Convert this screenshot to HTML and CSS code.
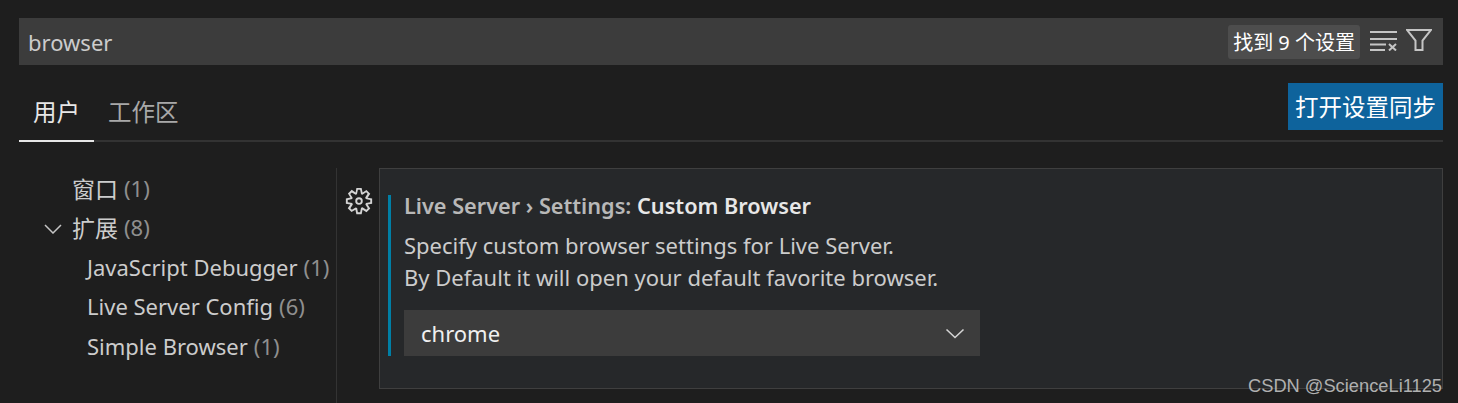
FILE: index.html
```html
<!DOCTYPE html>
<html>
  <head>
    <meta charset="utf-8">
    <link rel="stylesheet" href="styles.css">
  </head>
  <body>
    <div class="search">
      <span class="search-text">browser</span>
      <span class="count">找到 9 个设置</span>
      <svg class="clear-icon" width="27" height="20" viewBox="0 0 27 20" fill="none" stroke="#c5c5c5" stroke-width="2">
        <path d="M0 1h27M0 8h27M0 13.500h16M0 19h15"/>
        <path d="M19 13l7 6.500M26 13l-7 6.500"/>
      </svg>
      <svg class="filter-icon" width="26" height="22" viewBox="0 0 26 22" fill="none" stroke="#c5c5c5" stroke-width="2">
        <path d="M1 1h24L16.500 11.500V21h-7V11.500z"/>
      </svg>
    </div>

    <div class="tabs">
      <div class="tab active">用户</div>
      <div class="tab">工作区</div>
      <button class="sync">打开设置同步</button>
    </div>

    <div class="main">
      <div class="tree">
        <div class="tree-row level1"><span class="cjk">窗口</span> <span class="num">(1)</span></div>
        <div class="tree-row level1">
          <svg class="twistie" width="18" height="10" viewBox="0 0 18 10" fill="none" stroke="#c5c5c5" stroke-width="1.500"><path d="M1 1l8 8 8-8"/></svg>
          <span class="cjk">扩展</span> <span class="num">(8)</span>
        </div>
        <div class="tree-row level2">JavaScript Debugger <span class="num">(1)</span></div>
        <div class="tree-row level2">Live Server Config <span class="num">(6)</span></div>
        <div class="tree-row level2">Simple Browser <span class="num">(1)</span></div>
      </div>

      <div class="gear-col">
        <svg width="30" height="30" viewBox="0 0 16 16" fill="#d4d4d4">
          <path fill-rule="evenodd" d="M9.100 4.400L8.600 2H7.400l-.5 2.400-.7.300-2-1.300-.9.800 1.300 2-.2.700-2.400.5v1.200l2.400.5.300.8-1.300 2 .8.800 2-1.300.8.300.4 2.300h1.200l.5-2.400.8-.3 2 1.300.8-.8-1.300-2 .3-.8 2.300-.4V7.400l-2.400-.5-.3-.8 1.300-2-.8-.8-2 1.300-.7-.2zM9.400 1l.5 2.400L12 2.100l2 2-1.400 2.100 2.400.4v2.800l-2.400.5L14 12l-2 2-2.100-1.400-.5 2.400H6.600l-.5-2.400L4 13.900l-2-2 1.400-2.100L1 9.400V6.600l2.400-.5L2.100 4l2-2 2.100 1.400.4-2.400h2.800zM10 8a2 2 0 1 1-4 0 2 2 0 0 1 4 0zM8 9a1 1 0 1 0 0-2 1 1 0 0 0 0 2z"/>
        </svg>
      </div>

      <div class="card">
        <div class="setting">
          <div class="setting-title">Live Server › Settings: <span class="setting-name">Custom Browser</span></div>
          <div class="setting-desc">
            <p>Specify custom browser settings for Live Server.</p>
            <p>By Default it will open your default favorite browser.</p>
          </div>
          <div class="select">
            <span>chrome</span>
            <svg width="20" height="11" viewBox="0 0 20 11" fill="none" stroke="#d4d4d4" stroke-width="1.600"><path d="M1.500 1.500l8.500 8 8.500-8"/></svg>
          </div>
        </div>
      </div>
    </div>

    <div class="watermark">CSDN @ScienceLi1125</div>
  </body>
</html>
```

FILE: styles.css
```css
* {
  box-sizing: border-box;
}

html, body {
  height: 403px;
  overflow: hidden;
}

body {
  margin: 0;
  padding: 18px 15px 0 19px;
  position: relative;
  background-color: #1e1e1e;
  color: #cccccc;
  font-family: "Noto Sans", "Noto Sans CJK SC", sans-serif;
  font-size: 22px;
}

.search {
  display: flex;
  align-items: center;
  height: 47px;
  padding: 0 11px 0 9px;
  background-color: #3c3c3c;
}

.search-text {
  flex: 1;
  font-size: 22px;
}

.count {
  padding: 2px 5px;
  height: 34px;
  line-height: 32px;
  margin-right: 10px;
  border-radius: 3px;
  background-color: #4d4d4d;
  color: #ffffff;
  font-size: 20px;
}

.clear-icon {
  margin: 0 9px 2px 0;
}

.filter-icon {
  margin-bottom: 3px;
}

.tabs {
  display: flex;
  height: 77px;
  padding-top: 18px;
  border-bottom: 2px solid #333333;
}

.tab {
  height: 59px;
  padding: 12px 14px 0 14px;
  color: #a8a8a8;
  font-size: 23.500px;
  line-height: 34px;
  white-space: nowrap;
}

.tab.active {
  width: 75px;
  border-bottom: 2px solid #e7e7e7;
  color: #e7e7e7;
}

.sync {
  margin-left: auto;
  width: 155px;
  height: 47px;
  padding: 0 0 2px;
  border: none;
  background-color: #0e639c;
  color: #ffffff;
  font-family: inherit;
  font-size: 23.500px;
}

.main {
  display: flex;
  margin-top: 26px;
}

.tree {
  width: 318px;
  height: 235px;
  border-right: 1px solid #333333;
  white-space: nowrap;
}

.tree-row {
  display: flex;
  align-items: center;
  gap: 6px;
  height: 39.500px;
}

.cjk {
  font-size: 23px;
}

.level1 {
  padding-left: 53px;
  position: relative;
}

.level2 {
  padding-left: 68px;
}

.num {
  color: #8f8f8f;
}

.twistie {
  position: absolute;
  left: 25px;
  top: 16px;
}

.gear-col {
  width: 42px;
  padding: 18px 0 0 7px;
}

.card {
  flex: 1;
  height: 221px;
  padding: 26px 0 0 8px;
  border: 1px solid #3f3f3f;
  background-color: #26282a;
}

.setting {
  height: 161px;
  padding-left: 13px;
  border-left: 3px solid #007fa6;
}

.setting-title {
  font-size: 21.700px;
  font-weight: 600;
  line-height: 22px;
  color: #b8b8b8;
}

.setting-name {
  color: #e7e7e7;
}

.setting-desc {
  margin-top: 12px;
  line-height: 32px;
}

.setting-desc p {
  margin: 0;
}

.select {
  display: flex;
  align-items: center;
  justify-content: space-between;
  width: 576px;
  height: 46px;
  margin-top: 17px;
  padding: 0 15px 0 17px;
  background-color: #3c3c3c;
  color: #f0f0f0;
}

.watermark {
  position: absolute;
  right: 16px;
  top: 374px;
  color: #b0b0b0;
  font-family: "Liberation Sans", sans-serif;
  font-size: 18.300px;
  line-height: 24px;
}
```
